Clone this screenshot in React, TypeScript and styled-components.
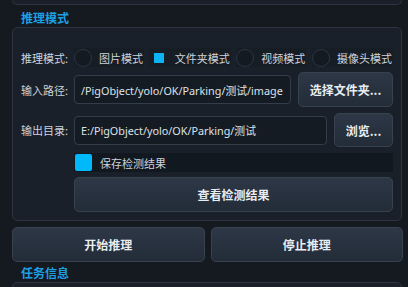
import React from "react";
import styled, { createGlobalStyle } from "styled-components";

const Global = createGlobalStyle`
  html, body { margin: 0; padding: 0; background: #151a21; }
  body { font-family: "Noto Sans CJK SC", "Noto Sans", sans-serif; overflow: hidden; }
  * { box-sizing: border-box; }
`;

const Page = styled.div`
  width: 408px;
  height: 287px;
  padding: 0 6px 0 12px;
  background: #151a21;
  overflow: hidden;
`;

const TopPanel = styled.div`
  height: 5px;
  border: 1px solid #2b3440;
  border-top: none;
  border-radius: 0 0 5px 5px;
  background: #1a2029;
`;

const SectionTitle = styled.div<{ $top: number }>`
  margin: ${(p) => p.$top}px 0 1px 9px;
  font-size: 12px;
  line-height: 16px;
  font-weight: 700;
  color: #1e9fe4;
`;

const GroupBox = styled.div<{ $h?: number }>`
  border: 1px solid #2b3440;
  border-radius: 5px;
  background: #1a2029;
  padding: 20px 8px 8px 8px;
  display: flex;
  flex-direction: column;
  ${(p) => (p.$h ? `height: ${p.$h}px;` : "")}
`;

const Row = styled.div<{ $mt?: number; $h: number }>`
  display: flex;
  align-items: center;
  height: ${(p) => p.$h}px;
  margin-top: ${(p) => p.$mt ?? 0}px;
`;

const Label = styled.div`
  width: 53px;
  flex: none;
  font-size: 11px;
  color: #cdd3db;
  white-space: nowrap;
`;

const RadioGroup = styled.div`
  flex: 1;
  display: flex;
  justify-content: space-between;
  align-items: center;
  height: 100%;
`;

const RadioItem = styled.div`
  display: flex;
  align-items: center;
  gap: 7px;
  height: 19px;
  padding-right: 1px;
  background: #171d25;
`;

const RadioCircle = styled.span<{ $checked?: boolean }>`
  width: 18px;
  height: 18px;
  flex: none;
  display: flex;
  align-items: center;
  justify-content: center;
  border-radius: 50%;
  border: 1px solid ${(p) => (p.$checked ? "transparent" : "#2c3644")};
  background: ${(p) => (p.$checked ? "transparent" : "#141a21")};
  &::after {
    content: "";
    display: ${(p) => (p.$checked ? "block" : "none")};
    width: 10px;
    height: 10px;
    background: #0db4f5;
  }
`;

const ItemText = styled.span`
  font-size: 11px;
  color: #cdd3db;
  white-space: nowrap;
`;

const PathInput = styled.div<{ $w: number }>`
  width: ${(p) => p.$w}px;
  height: 29px;
  flex: none;
  border: 1px solid #343e4b;
  border-radius: 4px;
  background: #151b22;
  padding: 0 6px;
  display: flex;
  align-items: center;
  font-family: "Noto Sans", "Noto Sans CJK SC", sans-serif;
  font-size: 10.8px;
  color: #dde2e8;
  white-space: nowrap;
  overflow: hidden;
`;

const Button = styled.button<{ $w?: number; $h?: number }>`
  ${(p) => (p.$w ? `width: ${p.$w}px; flex: none;` : "flex: 1;")}
  height: ${(p) => p.$h ?? 35}px;
  border: 1px solid #38424f;
  border-radius: 5px;
  background: linear-gradient(#2d3746, #232c38);
  color: #e8edf2;
  font-family: "Noto Sans CJK SC", sans-serif;
  font-size: 12px;
  font-weight: 700;
  padding: 0;
  display: flex;
  align-items: center;
  justify-content: center;
`;

const Spacer = styled.div<{ $w: number }>`
  width: ${(p) => p.$w}px;
  flex: none;
`;

const CheckRow = styled.div`
  margin-left: 53px;
  height: 19px;
  margin-top: 6px;
  display: flex;
  align-items: center;
  gap: 8px;
  background: #121820;
`;

const CheckBox = styled.span`
  width: 17px;
  height: 17px;
  border-radius: 2px;
  background: #00b9fb;
  flex: none;
  margin-left: 1px;
`;

const WideButtonWrap = styled.div`
  margin-left: 53px;
  margin-top: 5px;
  display: flex;
`;

const ActionRow = styled.div`
  display: flex;
  gap: 6px;
  margin-top: 6px;
  margin-right: -1px;
`;

export default function App() {
  const modes = [
    { name: "图片模式", checked: false },
    { name: "文件夹模式", checked: true },
    { name: "视频模式", checked: false },
    { name: "摄像头模式", checked: false },
  ];
  return (
    <>
      <Global />
      <Page>
        <TopPanel />
        <SectionTitle $top={5}>推理模式</SectionTitle>
        <GroupBox>
          <Row $h={19}>
            <Label>推理模式:</Label>
            <RadioGroup>
              {modes.map((m) => (
                <RadioItem key={m.name}>
                  <RadioCircle $checked={m.checked} />
                  <ItemText>{m.name}</ItemText>
                </RadioItem>
              ))}
            </RadioGroup>
          </Row>
          <Row $h={35} $mt={5}>
            <Label>输入路径:</Label>
            <PathInput $w={217}>/PigObject/yolo/OK/Parking/测试/image</PathInput>
            <Spacer $w={7} />
            <Button>选择文件夹...</Button>
          </Row>
          <Row $h={34} $mt={6}>
            <Label>输出目录:</Label>
            <PathInput $w={253}>E:/PigObject/yolo/OK/Parking/测试</PathInput>
            <Spacer $w={7} />
            <Button $h={34}>浏览...</Button>
          </Row>
          <CheckRow>
            <CheckBox />
            <ItemText>保存检测结果</ItemText>
          </CheckRow>
          <WideButtonWrap>
            <Button>查看检测结果</Button>
          </WideButtonWrap>
        </GroupBox>
        <ActionRow>
          <Button>开始推理</Button>
          <Button>停止推理</Button>
        </ActionRow>
        <SectionTitle $top={3}>任务信息</SectionTitle>
        <GroupBox $h={60} />
      </Page>
    </>
  );
}
